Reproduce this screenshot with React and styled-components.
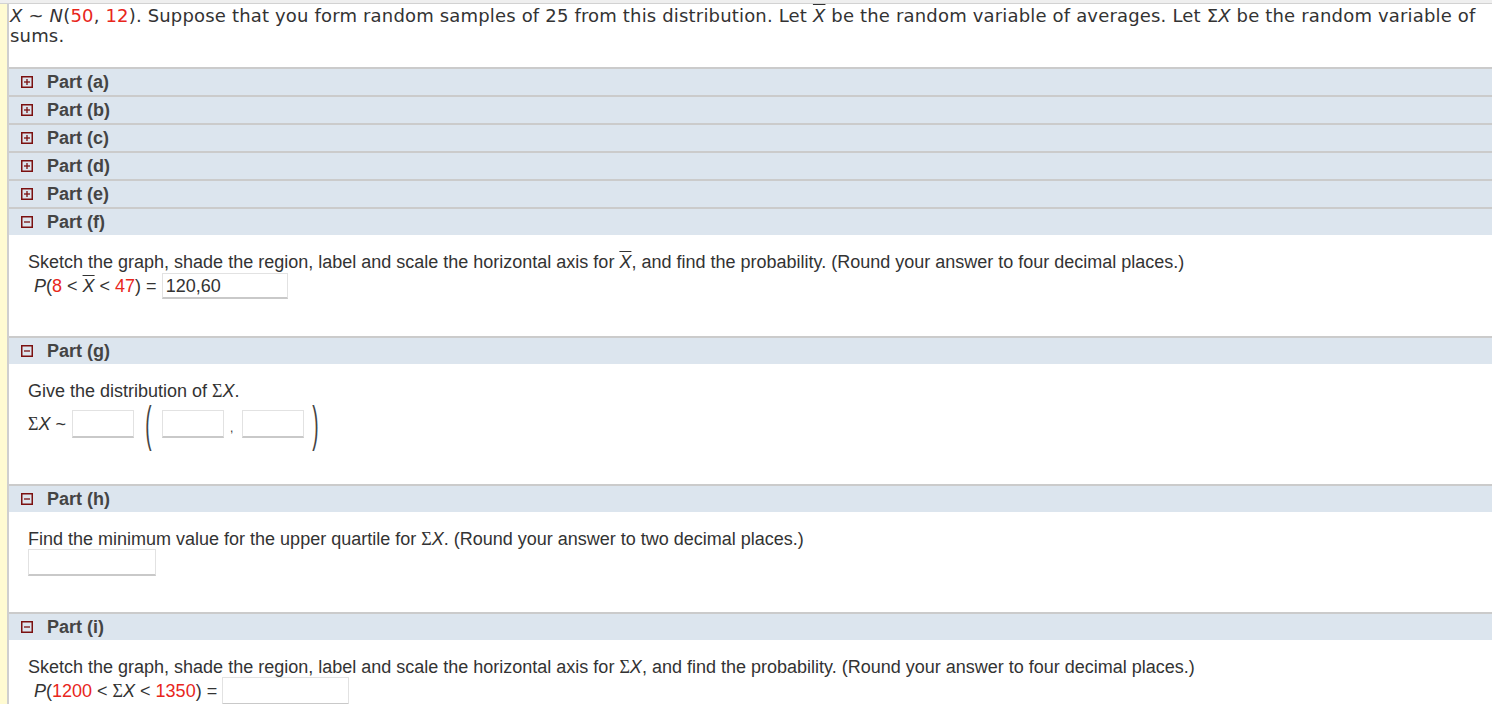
import React from 'react'
import styled, { createGlobalStyle } from 'styled-components'

const GlobalStyle = createGlobalStyle`
  html, body {
    margin: 0;
    padding: 0;
    background: #fff;
  }
  body {
    font-family: "Liberation Sans", Arial, sans-serif;
    color: #333;
  }
`

const TopBand = styled.div`
  height: 3px;
  background: #efefef;
  border-bottom: 1px solid #d2d2d2;
`

const Layout = styled.div`
  display: flex;
  min-height: 700px;
`

const Rail = styled.div`
  width: 7px;
  flex: none;
  background: #fffbd2;
  border-right: 2px solid #cfcfcf;
`

const Main = styled.div`
  flex: 1;
  min-width: 0;
`

const Intro = styled.div`
  font-family: "DejaVu Sans", Verdana, sans-serif;
  font-size: 18px;
  letter-spacing: 0.17px;
  line-height: 20px;
  color: #333;
  padding: 2px 14px 21px 1px;
`

const Red = styled.span`
  color: #e8261c;
`

const Ital = styled.i`
  font-style: italic;
`

const Bar = styled.i`
  font-style: italic;
  text-decoration: overline;
  text-decoration-thickness: 1px;
`

const Header = styled.div`
  display: flex;
  align-items: center;
  gap: 14px;
  height: 26px;
  padding-left: 12px;
  background: #dce5ee;
  border-top: 2px solid #cbcbcb;
  font-weight: bold;
  font-size: 18px;
  color: #444;
`

const Content = styled.div`
  padding: 17px 18px ${p => p.$bottom}px 19px;
  font-size: 18px;
  line-height: 20px;
  color: #333;
`

const Line = styled.div`
  line-height: 20px;
`

const FormulaRow = styled.div`
  display: flex;
  align-items: center;
  margin-left: ${p => p.$indent || 0}px;
  height: ${p => p.$height || 27}px;
  white-space: pre;
`

const Field = styled.div`
  width: ${p => p.$w}px;
  height: ${p => p.$h || 26}px;
  box-sizing: border-box;
  border: 1px solid #e2e2e2;
  border-bottom: 2px solid #c9c9c9;
  background: #fff;
  font-size: 18px;
  line-height: 24px;
  padding-left: 3px;
  color: #333;
  margin-left: ${p => p.$ml || 0}px;
`

const Paren = styled.span`
  display: inline-block;
  font-family: "Liberation Sans", Arial, sans-serif;
  font-size: 21px;
  font-weight: normal;
  color: #444;
  transform: scale(0.9, 2.4);
  margin: ${p => p.$m};
`

const Comma = styled.span`
  margin: 8px 9px 0 6px;
  font-size: 12px;
`

const Sig = styled.span`
  font-family: "Liberation Serif", "Times New Roman", serif;
`

function Icon({ open }) {
  return (
    <svg width="12" height="12" viewBox="0 0 12 12">
      <rect x="0.75" y="0.75" width="10.5" height="10.5" fill="none" stroke="#7b1010" strokeWidth="1.5" />
      <line x1="3" y1="6" x2="9" y2="6" stroke="#7b1010" strokeWidth="1.3" />
      {!open && <line x1="6" y1="3" x2="6" y2="9" stroke="#7b1010" strokeWidth="1.3" />}
    </svg>
  )
}

function Part({ label, open, bottom, children }) {
  return (
    <>
      <Header>
        <Icon open={open} />
        <span>Part ({label})</span>
      </Header>
      {open && <Content $bottom={bottom}>{children}</Content>}
    </>
  )
}

export default function App() {
  return (
    <>
      <GlobalStyle />
      <TopBand />
      <Layout>
        <Rail />
        <Main>
          <Intro>
            <Ital>X</Ital> ~ <Ital>N</Ital>(<Red>50</Red>, <Red>12</Red>). Suppose that you form random samples of 25 from this distribution. Let <Bar>X</Bar> be the random variable of averages. Let Σ<Ital>X</Ital> be the random variable of sums.
          </Intro>
          {['a', 'b', 'c', 'd', 'e'].map(l => (
            <Part key={l} label={l} />
          ))}
          <Part label="f" open bottom={37}>
            <Line>
              Sketch the graph, shade the region, label and scale the horizontal axis for <Bar>X</Bar>, and find the probability. (Round your answer to four decimal places.)
            </Line>
            <FormulaRow $indent={6}>
              <Ital>P</Ital>(<Red>8</Red> &lt; <Bar>X</Bar> &lt; <Red>47</Red>) = <Field $w={126}>120,60</Field>
            </FormulaRow>
          </Part>
          <Part label="g" open bottom={38}>
            <Line>
              Give the distribution of <Sig>Σ</Sig><Ital>X</Ital>.
            </Line>
            <FormulaRow $height={45}>
              <Sig>Σ</Sig><Ital>X</Ital> ~ <Field $w={62} $h={28} $ml={1} />
              <Paren $m="0 10px 0 11px">(</Paren>
              <Field $w={62} $h={28} />
              <Comma>,</Comma>
              <Field $w={62} $h={28} />
              <Paren $m="0 0 0 8px">)</Paren>
            </FormulaRow>
          </Part>
          <Part label="h" open bottom={36}>
            <Line>
              Find the minimum value for the upper quartile for <Sig>Σ</Sig><Ital>X</Ital>. (Round your answer to two decimal places.)
            </Line>
            <FormulaRow>
              <Field $w={128} $h={27} />
            </FormulaRow>
          </Part>
          <Part label="i" open bottom={30}>
            <Line>
              Sketch the graph, shade the region, label and scale the horizontal axis for <Sig>Σ</Sig><Ital>X</Ital>, and find the probability. (Round your answer to four decimal places.)
            </Line>
            <FormulaRow $indent={6}>
              <Ital>P</Ital>(<Red>1200</Red> &lt; <Sig>Σ</Sig><Ital>X</Ital> &lt; <Red>1350</Red>) = <Field $w={127} $h={28} />
            </FormulaRow>
          </Part>
        </Main>
      </Layout>
    </>
  )
}
